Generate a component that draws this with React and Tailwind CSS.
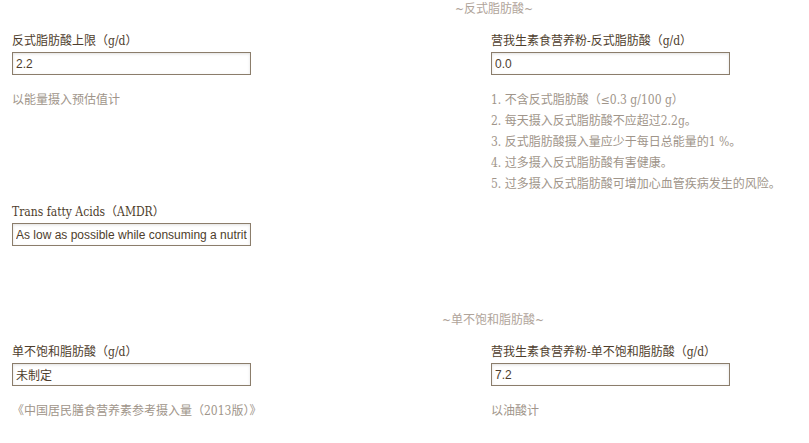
import React from 'react';

const font = "font-['DejaVu_Serif_Condensed','Liberation_Serif','Noto_Sans_CJK_SC',serif]";

const Field = ({ label, value }) => (
  <div>
    <label className={`block text-[12px] leading-[18px] text-[#4e3d2c] ${font}`}>{label}</label>
    <input
      readOnly
      value={value}
      className="mt-[2px] block w-[239px] h-[23px] border border-[#8b7d6b] bg-white px-[3px] text-[12px] text-[#4e3d2c] font-['Liberation_Sans','Noto_Sans_CJK_SC',sans-serif] shadow-[inset_0_1px_3px_rgba(0,0,0,0.12)] outline-none"
    />
  </div>
);

const Note = ({ children }) => (
  <p className={`mt-[15px] text-[12px] leading-[21px] text-[#a0958a] ${font}`}>{children}</p>
);

const Header = ({ children, pad }) => (
  <div className={`${pad} text-[12px] leading-[18px] text-[#b0a49a] ${font}`}>{children}</div>
);

const transNotes = [
  '1. 不含反式脂肪酸（≤0.3 g/100 g）',
  '2. 每天摄入反式脂肪酸不应超过2.2g。',
  '3. 反式脂肪酸摄入量应少于每日总能量的1 %。',
  '4. 过多摄入反式脂肪酸有害健康。',
  '5. 过多摄入反式脂肪酸可增加心血管疾病发生的风险。',
];

export default function App() {
  return (
    <div className="w-[809px] h-[443px] bg-white overflow-hidden">
      <Header pad="pl-[455px]">~反式脂肪酸~</Header>

      <div className="mt-[14px] grid grid-cols-[479px_1fr] pl-3">
        <div>
          <Field label="反式脂肪酸上限（g/d）" value="2.2" />
          <Note>以能量摄入预估值计</Note>
        </div>
        <div>
          <Field label="营我生素食营养粉-反式脂肪酸（g/d）" value="0.0" />
          <ul className={`mt-[15px] text-[12px] leading-[21px] text-[#a0958a] ${font}`}>
            {transNotes.map((t) => (
              <li key={t}>{t}</li>
            ))}
          </ul>
        </div>
        <div className="mt-[8px]">
          <Field label="Trans fatty Acids（AMDR）" value="As low as possible while consuming a nutritionally adequate diet" />
        </div>
        <div />
      </div>

      <div className="mt-[65px]">
        <Header pad="pl-[442px]">~单不饱和脂肪酸~</Header>
      </div>

      <div className="mt-[14px] grid grid-cols-[479px_1fr] pl-3">
        <div>
          <Field label="单不饱和脂肪酸（g/d）" value="未制定" />
          <Note>《中国居民膳食营养素参考摄入量（2013版）》</Note>
        </div>
        <div>
          <Field label="营我生素食营养粉-单不饱和脂肪酸（g/d）" value="7.2" />
          <Note>以油酸计</Note>
        </div>
      </div>
    </div>
  );
}
